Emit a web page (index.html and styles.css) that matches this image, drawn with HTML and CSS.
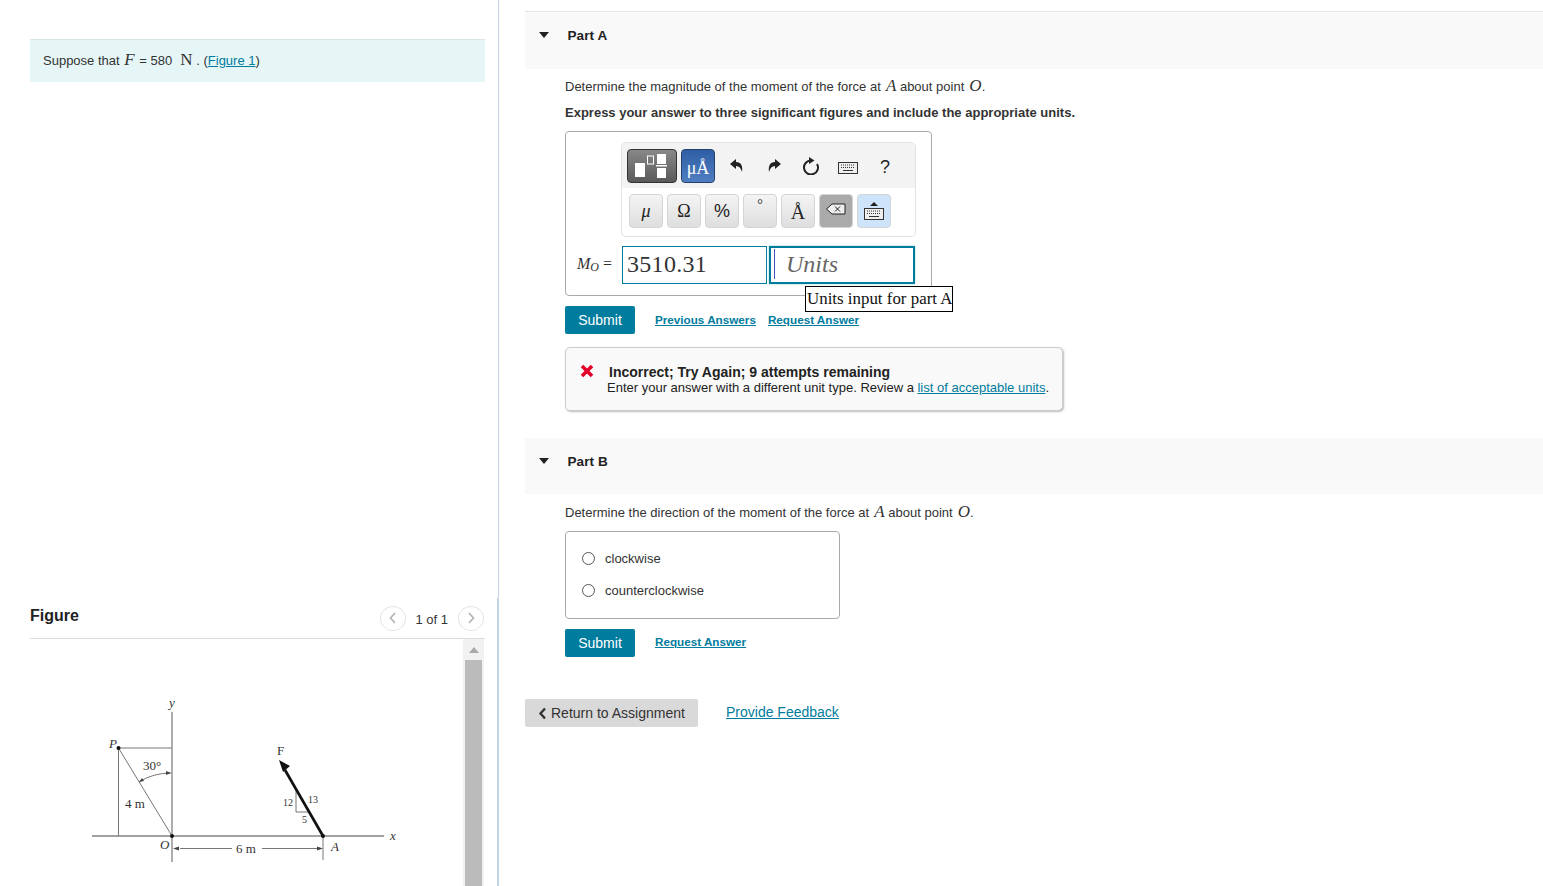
FILE: index.html
```html
<!DOCTYPE html>
<html lang="en">
<head>
    <meta charset="UTF-8">
    <meta name="viewport" content="width=device-width, initial-scale=1.0">
    <title>Part A and Part B</title>
    <link rel="stylesheet" href="styles.css">
</head>
<body>
    <div class="page">
        <div class="esquerda">
            <p class="intro">Suppose that <i class="math">F</i> = 580 &nbsp;<span class="unit">N</span> . (<a href="#">Figure 1</a>)</p>
            <div class="figura-topo">
                <h2>Figure</h2>
                <div class="paginas">
                    <span class="seta"><svg width="10" height="12" viewBox="0 0 10 12"><path d="M7 1 2.500 6 7 11" fill="none" stroke="#b5b5b5" stroke-width="1.8"/></svg></span>
                    <span class="conta">1 of 1</span>
                    <span class="seta"><svg width="10" height="12" viewBox="0 0 10 12"><path d="M3 1 7.500 6 3 11" fill="none" stroke="#b5b5b5" stroke-width="1.8"/></svg></span>
                </div>
            </div>
            <div class="figura-corpo">
                <svg class="desenho" width="433" height="247" viewBox="30 639 433 247">
                    <g stroke="#777" fill="none" stroke-width="1">
                        <path d="M172 712V862" stroke-width="1.2"/>
                        <path d="M92 836H384" stroke="#444"/>
                        <path d="M118.500 748H172M118.500 748V836M118.500 748 172 836" />
                        <path d="M139 782Q153 773 171 773"/>
                        <path d="M323 836V860"/>
                        <path d="M296 790V812H310"/>
                        <path d="M180 848.500H232M262 848.500H318"/>
                    </g>
                    <path d="M171 773l-5-2 0 4zM139 782l3-4 2 3zM173 848.500l6-2 0 4zM323 848.500l-6-2 0 4z" fill="#444"/>
                    <path d="M323 836 285 770" stroke="#111" stroke-width="2.700" fill="none"/>
                    <path d="M279 760l11 6-7 6z" fill="#111"/>
                    <circle cx="172" cy="836" r="2" fill="#111"/>
                    <circle cx="323" cy="836" r="2" fill="#111"/>
                    <circle cx="118.500" cy="748" r="2" fill="#111"/>
                    <g class="rotulos">
                        <text class="it" x="169" y="707">y</text>
                        <text class="it" x="109" y="748">P</text>
                        <text x="143" y="770">30°</text>
                        <text x="125" y="808">4 m</text>
                        <text class="it" x="160" y="849">O</text>
                        <text x="236" y="853">6 m</text>
                        <text class="it" x="331" y="851">A</text>
                        <text class="it" x="390" y="840">x</text>
                        <text x="277" y="755">F</text>
                        <text class="mini" x="283" y="806">12</text>
                        <text class="mini" x="308" y="803">13</text>
                        <text class="mini" x="302" y="823">5</text>
                    </g>
                </svg>
                <div class="rolagem">
                    <span class="rolagem-seta"></span>
                    <span class="rolagem-barra"></span>
                </div>
            </div>
        </div>

        <div class="direita">
            <div class="parte parte-a">
                <span class="triangulo"></span>
                <h3>Part A</h3>
            </div>
            <div class="conteudo">
                <p class="texto primeiro">Determine the magnitude of the moment of the force at <i class="math">A</i> about point <i class="math">O</i>.</p>
                <p class="texto forte">Express your answer to three significant figures and include the appropriate units.</p>

                <div class="resposta">
                    <div class="ferramentas">
                        <div class="linha-um">
                            <span class="modelo">
                                <svg width="48" height="32" viewBox="0 0 48 32">
                                    <rect x="7" y="13" width="10" height="14" fill="#fff"/>
                                    <rect x="19.500" y="6" width="6" height="8" fill="none" stroke="#fff"/>
                                    <rect x="29" y="4" width="9" height="10" fill="#fff"/>
                                    <rect x="28" y="15" width="11" height="1.500" fill="#fff"/>
                                    <rect x="29" y="18" width="9" height="10" fill="#fff"/>
                                </svg>
                            </span>
                            <span class="micro">μÅ</span>
                            <svg class="acao" width="16" height="16" viewBox="0 0 16 16"><path d="M1 6 7 1v3c5 0 7 4 6 10-1-4-3-6-6-6v3z" fill="#222"/></svg>
                            <svg class="acao" width="16" height="16" viewBox="0 0 16 16"><path d="M15 6 9 1v3c-5 0-7 4-6 10 1-4 3-6 6-6v3z" fill="#222"/></svg>
                            <svg class="acao" width="18" height="18" viewBox="0 0 18 18"><path d="M9 3.500a7 7 0 1 0 6 3.400" fill="none" stroke="#222" stroke-width="2"/><path d="M7 0l5.500 3.500-5.500 3.500z" fill="#222"/></svg>
                            <svg class="acao" width="20" height="14" viewBox="0 0 20 14"><rect x=".5" y="1.500" width="19" height="11" fill="#eee" stroke="#333"/><path d="M3 4h14M3 6.500h14" stroke="#333" stroke-dasharray="1 1"/><path d="M5 9.500h10" stroke="#333"/></svg>
                            <span class="ajuda">?</span>
                        </div>
                        <div class="linha-dois">
                            <span class="tecla"><i>μ</i></span>
                            <span class="tecla">Ω</span>
                            <span class="tecla sans">%</span>
                            <span class="tecla alto">°</span>
                            <span class="tecla angstrom">Å</span>
                            <span class="tecla apagar">
                                <svg width="20" height="12" viewBox="0 0 20 12"><path d="M.5 6 6 1h13v10H6z" fill="#eee" stroke="#222"/><path d="M9 3.500l5 5m0-5-5 5" stroke="#222"/></svg>
                            </span>
                            <span class="tecla azul">
                                <svg width="20" height="20" viewBox="0 0 20 20"><path d="M6 5l4-4 4 4z" fill="#222"/><rect x=".5" y="7.500" width="19" height="11" fill="#eee" stroke="#333"/><path d="M3 10h14M3 12.500h14" stroke="#333" stroke-dasharray="1 1"/><path d="M5 15.500h10" stroke="#333"/></svg>
                            </span>
                        </div>
                    </div>
                    <div class="linha-entrada">
                        <span class="rotulo"><i>M<sub>O</sub></i> =</span>
                        <span class="campo valor">3510.31</span>
                        <span class="campo unidades"><span class="cursor"></span>Units</span>
                        <span class="dica">Units input for part A</span>
                    </div>
                </div>

                <div class="acoes acoes-a">
                    <button class="enviar">Submit</button>
                    <a class="link-forte" href="#">Previous Answers</a>
                    <a class="link-forte" href="#">Request Answer</a>
                </div>

                <div class="aviso">
                    <svg class="xis" width="14" height="14" viewBox="0 0 14 14"><path d="M2 2l10 10M12 2 2 12" stroke="#e3002b" stroke-width="3.600"/></svg>
                    <div>
                        <p class="aviso-titulo">Incorrect; Try Again; 9 attempts remaining</p>
                        <p class="aviso-texto">Enter your answer with a different unit type. Review a <a href="#">list of acceptable units</a>.</p>
                    </div>
                </div>
            </div>

            <div class="parte parte-b">
                <span class="triangulo"></span>
                <h3>Part B</h3>
            </div>
            <div class="conteudo">
                <p class="texto primeiro segundo-bloco">Determine the direction of the moment of the force at <i class="math">A</i> about point <i class="math">O</i>.</p>
                <div class="opcoes">
                    <label class="opcao"><span class="radio"></span>clockwise</label>
                    <label class="opcao"><span class="radio"></span>counterclockwise</label>
                </div>
                <div class="acoes acoes-b">
                    <button class="enviar">Submit</button>
                    <a class="link-forte" href="#">Request Answer</a>
                </div>
            </div>

            <div class="rodape">
                <button class="voltar"><svg width="9" height="13" viewBox="0 0 9 13"><path d="M7 1.500 2.500 6.500 7 11.500" fill="none" stroke="#333" stroke-width="2.400"/></svg>Return to Assignment</button>
                <a class="feedback" href="#">Provide Feedback</a>
            </div>
        </div>
    </div>
</body>
</html>
```

FILE: styles.css
```css
*{
    margin: 0;
    padding: 0;
    box-sizing: border-box;
}
body{
    font-family: "Liberation Sans", Arial, sans-serif;
    font-size: 13px;
    color: #333;
    background-color: white;
}
a{
    color: #007c9e;
}
.page{
    display: flex;
    height: 886px;
    overflow: hidden;
}
.math{
    margin: 0 0 0 1.500px;
    font-family: "Liberation Serif", serif;
    font-size: 17px;
    line-height: 1;
}
.unit{
    margin-left: 1px;
    font-family: "Liberation Serif", serif;
    font-size: 17px;
    line-height: 1;
}

/* coluna da esquerda */
.esquerda{
    position: relative;
    width: 499px;
    flex-shrink: 0;
    padding-left: 30px;
    border-right: 1px solid #c3d3e3;
}
.esquerda::after{
    content: "";
    position: absolute;
    top: 598px;
    right: -1px;
    bottom: 0;
    width: 2px;
    background-color: #c3d3e3;
}
.intro{
    width: 455px;
    height: 43px;
    margin-top: 39px;
    padding: 11px 13px 0;
    line-height: 18px;
    background-color: #e6f6f7;
    border-top: 1px solid #dbe6e9;
}
.intro .math{
    margin: 0 1px;
}
.figura-topo{
    display: flex;
    justify-content: space-between;
    align-items: center;
    width: 455px;
    height: 39px;
    margin-top: 518px;
    border-bottom: 1px solid #ddd;
}
.figura-topo h2{
    font-size: 16px;
    font-weight: bold;
    color: #222;
    margin-top: -6px;
}
.paginas{
    display: flex;
    align-items: center;
    gap: 10px;
    margin-top: -2px;
    margin-right: 1px;
}
.seta{
    display: flex;
    align-items: center;
    justify-content: center;
    width: 26px;
    height: 25px;
    border: 1px solid #e4e4e4;
    border-radius: 50%;
}
.conta{
    margin-top: 2px;
    margin-left: -1px;
    font-size: 13px;
    color: #333;
}
.figura-corpo{
    display: flex;
    width: 454px;
}
.desenho{
    display: block;
    flex-shrink: 0;
}
.rotulos text{
    font-family: "Liberation Serif", serif;
    font-size: 13px;
    fill: #333;
}
.rotulos .it{
    font-style: italic;
}
.rotulos .mini{
    font-size: 10px;
}
.rolagem{
    width: 21px;
    height: 247px;
    padding: 0 2px;
    background-color: #f1f1f1;
}
.rolagem-seta{
    display: block;
    width: 0;
    height: 0;
    margin: 8px auto 7px;
    border-left: 5px solid transparent;
    border-right: 5px solid transparent;
    border-bottom: 6px solid #a8a8a8;
}
.rolagem-barra{
    display: block;
    height: 226px;
    background-color: #bbb;
}

/* coluna da direita */
.direita{
    flex: 1;
    padding-left: 26px;
}
.parte{
    display: flex;
    align-items: flex-start;
    background-color: #f9f9f9;
}
.parte h3{
    font-size: 13.500px;
    font-weight: bold;
    letter-spacing: 0.1px;
    color: #222;
    margin-left: 18.500px;
}
.parte-a{
    height: 58px;
    margin-top: 11px;
    padding: 16px 0 0 14px;
    border-top: 1px solid #e5e5e5;
}
.parte-b{
    height: 56px;
    margin-top: 27px;
    padding: 16px 0 0 14px;
}
.triangulo{
    width: 0;
    height: 0;
    margin-top: 4px;
    border-left: 5.500px solid transparent;
    border-right: 5.500px solid transparent;
    border-top: 6px solid #222;
}
.conteudo{
    padding-left: 40px;
}
.texto{
    line-height: 18px;
}
.primeiro{
    margin-top: 8px;
}
.segundo-bloco{
    margin-top: 9px;
}
.forte{
    margin-top: 8px;
    font-weight: bold;
}
.resposta{
    position: relative;
    width: 367px;
    height: 165px;
    margin-top: 9px;
    padding: 10px 0 0 55px;
    border: 1px solid #aaa;
    border-radius: 4px;
}
.ferramentas{
    width: 295px;
    height: 95px;
    border: 1px solid #e2e2e2;
    border-radius: 5px;
    overflow: hidden;
}
.linha-um{
    display: flex;
    align-items: center;
    height: 45px;
    padding-left: 5px;
    background-color: #f3f3f3;
}
.modelo{
    display: flex;
    width: 50px;
    height: 34px;
    border: 1px solid #333;
    border-radius: 4px;
    background-image: linear-gradient(#888, #5a5a5a);
}
.micro{
    width: 34px;
    height: 34px;
    margin-left: 4px;
    text-align: center;
    font-family: "Liberation Serif", serif;
    font-size: 18px;
    line-height: 36px;
    color: white;
    border: 1px solid #24406e;
    border-radius: 4px;
    background-image: linear-gradient(#2f5ea4, #4f7fc1);
}
.acao{
    flex-shrink: 0;
    margin-left: 14px;
}
.linha-um .acao:nth-of-type(2){
    margin-left: 21px;
}
.linha-um .acao:nth-of-type(3){
    margin-left: 20px;
}
.linha-um .acao:nth-of-type(4){
    margin-left: 18px;
    margin-top: 5px;
}
.ajuda{
    margin-left: 22px;
    margin-top: 3px;
    font-size: 18px;
    color: #222;
}
.linha-dois{
    display: flex;
    gap: 4px;
    padding: 6px 0 0 7px;
}
.tecla{
    display: flex;
    align-items: center;
    justify-content: center;
    width: 34px;
    height: 34px;
    font-family: "Liberation Serif", serif;
    font-size: 18px;
    color: #222;
    border: 1px solid #d4d4d4;
    border-radius: 4px;
    background-image: linear-gradient(#f4f4f4, #dedede);
}
.tecla.sans{
    font-family: "Liberation Sans", sans-serif;
}
.tecla.alto{
    align-items: flex-start;
    padding-top: 2px;
    font-size: 14px;
}
.tecla.angstrom{
    padding-top: 3px;
    font-size: 20px;
}
.tecla.apagar{
    background-image: none;
    background-color: #aaa;
    padding-bottom: 4px;
}
.tecla.azul{
    background-image: none;
    background-color: #cde4fb;
}
.linha-entrada{
    display: flex;
    align-items: center;
    height: 38px;
    margin-top: 9px;
    margin-left: -44px;
}
.rotulo{
    width: 45px;
    font-family: "Liberation Serif", serif;
    font-size: 16px;
    color: #333;
}
.rotulo sub{
    font-size: 12px;
    vertical-align: -2px;
}
.campo{
    height: 38px;
    font-family: "Liberation Serif", serif;
    font-size: 24px;
    line-height: 34px;
    border: 1px solid #007c9e;
}
.valor{
    width: 145px;
    padding-left: 4px;
    letter-spacing: 0.3px;
    color: #333;
}
.unidades{
    display: flex;
    align-items: center;
    width: 146px;
    margin-left: 2px;
    padding: 0 0 2px 3px;
    font-style: italic;
    color: #666;
    border-width: 2px;
    box-shadow: 0 0 2px #9cc;
}
.cursor{
    width: 1px;
    height: 30px;
    margin-right: 11px;
    background-color: #3c55c0;
}
.dica{
    position: absolute;
    left: 239px;
    top: 154px;
    padding: 0 0 0 1px;
    font-family: "Liberation Serif", serif;
    font-size: 16.900px;
    line-height: 24px;
    white-space: nowrap;
    color: #111;
    background-color: white;
    border: 1px solid black;
}
.acoes{
    display: flex;
    align-items: center;
    margin-top: 10px;
}
.enviar{
    width: 70px;
    height: 28px;
    font-family: "Liberation Sans", sans-serif;
    font-size: 14px;
    color: white;
    background-color: #007c9e;
    border: none;
    border-radius: 2px;
    margin-right: 20px;
}
.link-forte{
    font-size: 11.700px;
    font-weight: bold;
    margin-right: 12px;
    margin-top: -1px;
}
.acoes-b .link-forte{
    margin-top: -3px;
}
.aviso{
    display: flex;
    gap: 14px;
    width: 498px;
    height: 64px;
    margin-top: 13px;
    padding: 16px 0 0 14px;
    background-color: #f9f9f9;
    border: 1px solid #ccc;
    border-radius: 5px;
    box-shadow: 1px 1px 2px #bbb;
}
.xis{
    flex-shrink: 0;
}
.aviso-titulo{
    margin-left: 1px;
    font-size: 14px;
    line-height: 16px;
    font-weight: bold;
    color: #222;
}
.aviso-texto{
    font-size: 13px;
    line-height: 16px;
    color: #222;
    margin-left: -1px;
}
.opcoes{
    width: 275px;
    height: 88px;
    margin-top: 9px;
    padding-top: 10px;
    border: 1px solid #aaa;
    border-radius: 4px;
}
.opcao{
    display: flex;
    align-items: center;
    height: 32px;
    padding-left: 16px;
}
.radio{
    width: 13px;
    height: 13px;
    margin-right: 10px;
    border: 1px solid #555;
    border-radius: 50%;
}
.rodape{
    display: flex;
    align-items: center;
    margin-top: 42px;
}
.voltar{
    display: flex;
    align-items: center;
    gap: 4px;
    width: 173px;
    height: 28px;
    padding-left: 13px;
    font-family: "Liberation Sans", sans-serif;
    font-size: 14px;
    color: #333;
    background-color: #d9d9d9;
    border: none;
    border-radius: 2px;
}
.feedback{
    margin-left: 28px;
    margin-top: -2px;
    font-size: 14px;
}
```
